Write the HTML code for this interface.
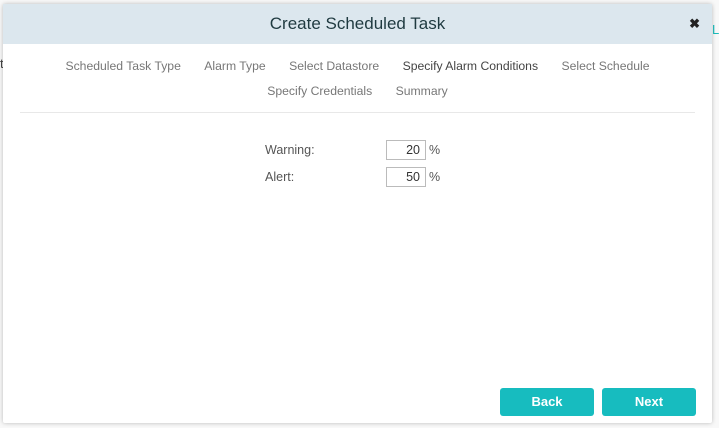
<!DOCTYPE html>
<html><head><style>
body{margin:0;width:719px;height:428px;background:#f8f8f8;position:relative;overflow:hidden;font-family:"Liberation Sans",sans-serif;}
.bgt{position:absolute;font-size:13px;}
.modal{position:absolute;left:3px;top:4px;width:709px;height:419px;background:#fff;box-shadow:0 0 4px rgba(0,0,0,.25);border-radius:2px;}
.hdr{height:40px;background:#dce7ee;text-align:center;line-height:40px;font-size:17px;color:#1f3a40;}
.x{position:absolute;right:12px;top:0;line-height:40px;font-size:13px;font-weight:bold;color:#222;}
.steps{position:absolute;top:50px;left:0;width:709px;text-align:center;font-size:12.2px;color:#777;line-height:25px;}
.steps span{margin:0 10px;}
.steps .a{color:#444;}
.hr{position:absolute;left:17px;right:17px;top:108px;border-top:1px solid #e8e8e8;}
.lbl{position:absolute;font-size:12.5px;color:#555;}
.inp{position:absolute;width:38px;height:18px;border:1px solid #bbb;text-align:right;font-size:12.5px;line-height:18px;color:#333;box-sizing:content-box;}
.inp i{font-style:normal;margin-right:5px;}
.btn{position:absolute;top:384px;width:94px;height:28px;background:#17bcbf;border-radius:3px;color:#fff;font-weight:bold;font-size:13px;text-align:center;line-height:28px;}
</style></head><body>
<div class="bgt" style="left:0;top:56px;color:#444">t</div>
<div class="bgt" style="left:712px;top:22px;color:#1bbdbd">L</div>
<div class="modal">
<div class="hdr">Create Scheduled Task<span class="x">✖</span></div>
<div class="steps"><span>Scheduled Task Type</span> <span>Alarm Type</span> <span>Select Datastore</span> <span class="a">Specify Alarm Conditions</span> <span>Select Schedule</span><br><span>Specify Credentials</span> <span>Summary</span></div>
<div class="hr"></div>
<div class="lbl" style="left:262px;top:139px">Warning:</div>
<div class="inp" style="left:383px;top:136px"><i>20</i></div>
<div class="lbl" style="left:426px;top:139px">%</div>
<div class="lbl" style="left:262px;top:166px">Alert:</div>
<div class="inp" style="left:383px;top:163px"><i>50</i></div>
<div class="lbl" style="left:426px;top:166px">%</div>
<div class="btn" style="left:497px">Back</div>
<div class="btn" style="left:599px">Next</div>
</div>
</body></html>
